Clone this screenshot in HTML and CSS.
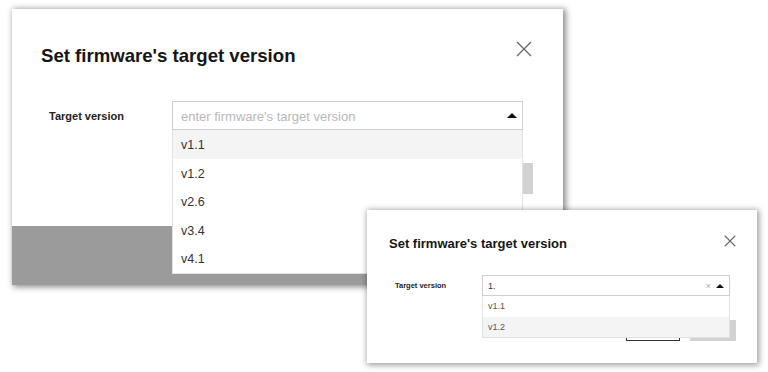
FILE: index.html
```html
<!DOCTYPE html>
<html lang="en">
<head>
<meta charset="utf-8">
<title>Set firmware's target version</title>
<link rel="stylesheet" href="styles.css">
</head>
<body>
<div class="canvas">
  <div class="shot shot-large">
    <div class="modal">
      <div class="modal-head">
        <h2 class="title">Set firmware's target version</h2>
        <svg class="close" viewBox="0 0 16 16" aria-hidden="true"><path d="M1 1 L15 15 M15 1 L1 15"/></svg>
      </div>
      <div class="field">
        <span class="label">Target version</span>
        <div class="select">
          <div class="control">
            <span class="placeholder">enter firmware's target version</span>
            <span class="caret"></span>
          </div>
          <ul class="menu">
            <li class="option is-active">v1.1</li>
            <li class="option">v1.2</li>
            <li class="option">v2.6</li>
            <li class="option">v3.4</li>
            <li class="option">v4.1</li>
          </ul>
        </div>
      </div>
      <div class="actions">
        <button class="btn btn-outline" aria-label="Cancel"></button>
        <button class="btn btn-primary" aria-label="Save"></button>
      </div>
    </div>
    <div class="backdrop"></div>
  </div>

  <div class="shot shot-small">
    <div class="modal">
      <div class="modal-head">
        <h2 class="title">Set firmware's target version</h2>
        <svg class="close" viewBox="0 0 16 16" aria-hidden="true"><path d="M1 1 L15 15 M15 1 L1 15"/></svg>
      </div>
      <div class="field">
        <span class="label">Target version</span>
        <div class="select">
          <div class="control">
            <span class="value">1.</span>
            <span class="clear">×</span>
            <span class="caret"></span>
          </div>
          <ul class="menu">
            <li class="option">v1.1</li>
            <li class="option is-active">v1.2</li>
          </ul>
        </div>
      </div>
      <div class="actions">
        <button class="btn btn-outline" aria-label="Cancel"></button>
        <button class="btn btn-primary" aria-label="Save"></button>
      </div>
    </div>
  </div>
</div>
</body>
</html>
```

FILE: styles.css
```css
* { box-sizing: border-box; }

html, body {
  margin: 0;
  padding: 0;
  background: #ffffff;
}

body {
  font-family: "Liberation Sans", Arial, Helvetica, sans-serif;
  color: #1a1a1a;
}

.canvas {
  position: relative;
  width: 768px;
  height: 372px;
  overflow: hidden;
  background: #ffffff;
}

/* screenshots placed on a free canvas */
.shot {
  position: absolute;
  background: #ffffff;
  display: flex;
  flex-direction: column;
}

.shot-large {
  left: 12px;
  top: 9px;
  width: 551px;
  height: 276px;
  box-shadow: 2px 1px 6px 1px rgba(0, 0, 0, 0.45);
  z-index: 1;
}

.shot-small {
  left: 367px;
  top: 210px;
  width: 390px;
  height: 153px;
  box-shadow: 1px 1px 6px 1px rgba(0, 0, 0, 0.4);
  z-index: 2;
}

.modal {
  background: #ffffff;
  display: flex;
  flex-direction: column;
}

.backdrop {
  flex: 1;
  background: #9b9b9b;
}

.modal-head {
  display: flex;
  justify-content: space-between;
  align-items: flex-start;
}

.title {
  margin: 0;
  font-weight: bold;
  color: #161616;
}

.close {
  display: block;
  fill: none;
  stroke: #6a6a6a;
}

.field {
  display: flex;
  align-items: center;
}

.label {
  font-weight: bold;
  color: #222222;
  flex: none;
}

.select {
  position: relative;
  flex: none;
}

.control {
  display: flex;
  align-items: center;
  border: 1px solid #cfcfcf;
  background: #ffffff;
}

.placeholder {
  flex: 1;
  color: #b8b8b8;
}

.value {
  flex: 1;
  color: #333333;
}

.clear {
  color: #a8a8a8;
}

.caret {
  width: 0;
  height: 0;
  border-style: solid;
  border-color: transparent transparent #111111 transparent;
}

.menu {
  position: absolute;
  top: 100%;
  left: 0;
  right: 0;
  margin: 0;
  padding: 0;
  list-style: none;
  background: #ffffff;
  border: 1px solid #e2e2e2;
  border-top: none;
  z-index: 3;
}

.option {
  color: #333333;
}

.option.is-active {
  background: #f4f4f4;
}

.actions {
  display: flex;
  justify-content: flex-end;
}

.btn {
  display: block;
  padding: 0;
  margin: 0;
  font: inherit;
}

.btn-outline {
  background: #ffffff;
  border: 1.5px solid #333333;
}

.btn-primary {
  background: #d2d2d2;
  border: none;
}

/* ---------- large screenshot ---------- */
.shot-large .modal {
  height: 217px;
}

.shot-large .modal-head {
  padding: 32px 31px 0 29px;
}

.shot-large .title {
  font-size: 18.6px;
  line-height: 22px;
  margin-top: 3.5px;
}

.shot-large .close {
  width: 16px;
  height: 16px;
  stroke-width: 1.4;
}

.shot-large .field {
  margin-top: 34.5px;
  padding-left: 37px;
}

.shot-large .label {
  width: 123px;
  font-size: 11px;
}

.shot-large .select {
  width: 351px;
}

.shot-large .control {
  height: 29px;
  padding: 0 5px 0 8px;
}

.shot-large .placeholder {
  font-size: 13px;
  padding-top: 2px;
}

.shot-large .caret {
  border-width: 0 5.5px 5.5px 5.5px;
}

.shot-large .option {
  font-size: 12.5px;
  line-height: 26.5px;
  padding: 2px 0 0 8px;
}

.shot-large .actions {
  margin-top: 33px;
  padding-right: 30px;
  gap: 14px;
}

.shot-large .btn {
  height: 31px;
}

.shot-large .btn-outline { width: 76px; }
.shot-large .btn-primary { width: 65px; }

/* ---------- small screenshot ---------- */
.shot-small .modal {
  flex: 1;
}

.shot-small .modal-head {
  padding: 25px 21px 0 22px;
}

.shot-small .title {
  font-size: 13px;
  line-height: 15px;
  margin-top: 1px;
}

.shot-small .close {
  width: 12px;
  height: 12px;
  stroke-width: 1.5;
}

.shot-small .field {
  margin-top: 24px;
  padding-left: 28px;
}

.shot-small .label {
  width: 87px;
  font-size: 7.5px;
}

.shot-small .select {
  width: 248px;
}

.shot-small .control {
  height: 21px;
  padding: 0 5px 0 5px;
}

.shot-small .value {
  font-size: 9px;
}

.shot-small .clear {
  font-size: 9px;
  margin-right: 5px;
}

.shot-small .caret {
  border-width: 0 4px 4px 4px;
}

.shot-small .option {
  font-size: 9px;
  line-height: 19.5px;
  padding: 1px 0 0 5px;
  color: #555555;
}

.shot-small .actions {
  margin-top: 24px;
  padding-right: 21px;
  gap: 10px;
}

.shot-small .btn {
  height: 21px;
}

.shot-small .btn-outline { width: 54px; }
.shot-small .btn-primary { width: 46px; }
```
